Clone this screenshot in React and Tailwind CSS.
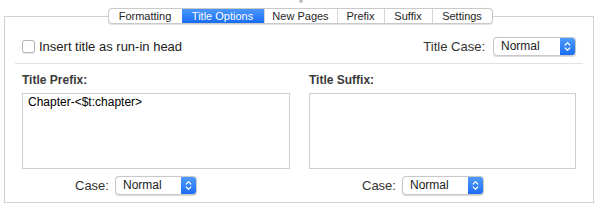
import React from 'react';

const tabs = [
  { name: 'Formatting', w: 'w-[73px]' },
  { name: 'Title Options', w: 'w-[82px]', active: true },
  { name: 'New Pages', w: 'w-[73px]' },
  { name: 'Prefix', w: 'w-[47px]' },
  { name: 'Suffix', w: 'w-[48px]' },
  { name: 'Settings', w: 'w-[60px]' },
];

const Select = ({ value, w = 'w-[83px]' }) => (
  <div className={`flex h-[19px] ${w} overflow-hidden rounded-[4px] border border-[#c8c8c8] bg-white shadow-[0_0.5px_1px_rgba(0,0,0,0.15)]`}>
    <div className="flex-1 pl-[7px] text-[12px] leading-[17px] text-[#222]">{value}</div>
    <div className="flex w-[15px] items-center justify-center bg-gradient-to-b from-[#4d9bfb] to-[#1b6cf2]">
      <svg width="7" height="11" viewBox="0 0 7 11" fill="none" stroke="white" strokeWidth="1.2" strokeLinecap="round" strokeLinejoin="round">
        <path d="M1.2 4 L3.5 1.7 L5.8 4" />
        <path d="M1.2 7 L3.5 9.3 L5.8 7" />
      </svg>
    </div>
  </div>
);

const Column = ({ label, text }) => (
  <div className="flex flex-col">
    <div className="mb-[5px] h-[15px] text-[12px] font-bold leading-[15px] text-[#3a3a3a]">{label}</div>
    <div className="h-[76px] border border-[#cfcfcf] bg-white px-[5px] pt-[1px] text-[12px] leading-[14px] text-black [font-family:'Liberation_Sans',Arial,sans-serif]">
      {text}
    </div>
    <div className="mt-[7px] flex items-center pl-[53px]">
      <span className="mr-[6px] text-[13px] text-[#333]">Case:</span>
      <Select value="Normal" w="w-[82px]" />
    </div>
  </div>
);

export default function App() {
  return (
    <div className="h-[207px] w-[600px] bg-white pl-[4px] pr-[6px] font-['Helvetica_Neue','Liberation_Sans',Arial,sans-serif]">
      <div className="flex h-[8px] justify-center pl-[3px]">
        <div className="h-[3px] w-[4px] rounded-b-[2px] bg-[#bdbdbd]" />
      </div>
      <div className="relative z-10 flex justify-center pl-[2px]">
        <div className="flex h-[16px] overflow-hidden rounded-[4px] border border-[#c9c9c9] bg-white text-[11px] leading-[14px] text-[#262626] shadow-[0_0.5px_1px_rgba(0,0,0,0.12)]">
          {tabs.map((t, i) => (
            <div
              key={t.name}
              className={`${t.w} text-center ${i > 0 && !t.active ? 'border-l border-[#d6d6d6]' : ''} ${
                t.active ? 'bg-gradient-to-b from-[#4a97fb] to-[#176cf3] text-white' : ''
              }`}
            >
              {t.name}
            </div>
          ))}
        </div>
      </div>
      <div className="-mt-[8px] h-[187px] border border-[#d2d2d2] bg-white px-[17px] pt-[20px]">
        <div className="flex items-center justify-between">
          <label className="flex items-center">
            <span className="h-[13px] w-[13px] rounded-[3px] border border-[#b5b5b5] bg-white shadow-[0_0.5px_1px_rgba(0,0,0,0.1)]" />
            <span className="ml-[4px] text-[13px] text-[#222]">Insert title as run-in head</span>
          </label>
          <div className="flex items-center">
            <span className="mr-[8px] text-[13px] text-[#333]">Title Case:</span>
            <Select value="Normal" />
          </div>
        </div>
        <div className="mx-[-7px] mt-[6px] border-t border-[#e2e2e2]" />
        <div className="mt-[9px] grid grid-cols-[268px_267px] gap-x-[19px]">
          <Column label="Title Prefix:" text="Chapter-<$t:chapter>" />
          <Column label="Title Suffix:" text="" />
        </div>
      </div>
    </div>
  );
}
